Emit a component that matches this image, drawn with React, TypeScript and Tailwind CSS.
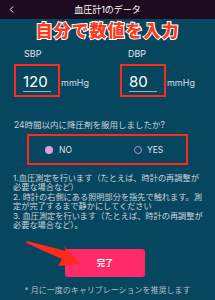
import { ChevronLeft } from 'lucide-react'

const font = "font-['Inter','Noto_Sans_CJK_JP',sans-serif]"

function ValueBox({ label, value, labelPad }: { label: string, value: string, labelPad: string }) {
  return (
    <div className="flex flex-col">
      <div className={`${labelPad} text-[9px] leading-[10px] text-[#e4e8ec]`}>{label}</div>
      <div className="mt-[5px] flex items-end">
        <div className="w-[46px] h-[33px] border-2 border-[#ff2a1a] px-[7px] pt-[7px]">
          <div className="border-b border-[#9fb4c0] text-[15px] leading-[17px] text-white pb-[1px]">{value}</div>
        </div>
        <div className="ml-[1px] mb-[9px] text-[9px] leading-[10px] text-[#d8dde2]">mmHg</div>
      </div>
    </div>
  )
}

export default function App() {
  return (
    <div className={`${font} w-[215px] h-[300px] overflow-hidden bg-[#07465f] flex flex-col`}>
      <div className="h-[19px] bg-[#1f0b20] relative flex items-center justify-center shrink-0">
        <ChevronLeft className="absolute left-[6px] top-[4px] text-white" size={11} strokeWidth={2} />
        <span className="text-[9px] leading-[10px] text-white">血圧計1のデータ</span>
      </div>

      <div className="relative flex-1 flex flex-col px-[14px]">
        <div className="mt-[2px] text-center text-[17px] leading-[20px] font-black tracking-[1px] text-[#ff3a1c] [-webkit-text-stroke:2px_white] [paint-order:stroke_fill]">
          自分で数値を入力
        </div>

        <div className="mt-[8px] flex gap-[31px]">
          <ValueBox label="SBP" value="120" labelPad="pl-[10px]" />
          <ValueBox label="DBP" value="80" labelPad="pl-[8px]" />
        </div>

        <div className="mt-[23px] text-[8.5px] leading-[10px] text-[#cdd4da]">24時間以内に降圧剤を服用しましたか?</div>

        <div className="mt-[4px] ml-[13px] w-[161px] h-[31px] border-2 border-[#ff2a1a] flex items-center">
          <div className="ml-[16px] flex items-center gap-[6px]">
            <span className="w-[8px] h-[8px] rounded-full bg-[#d9a3d6]" />
            <span className="text-[8.5px] leading-[10px] text-[#dfe3e8]">NO</span>
          </div>
          <div className="ml-[62px] flex items-center gap-[5px]">
            <span className="w-[8px] h-[8px] rounded-full border border-[#a494b4]" />
            <span className="text-[8.5px] leading-[10px] text-[#dfe3e8]">YES</span>
          </div>
        </div>

        <div className="-mx-[1px] mt-[9px] flex flex-col gap-[2px] text-[8.2px] leading-[8.5px] text-[#cdd4da] whitespace-nowrap">
          <div>1.血圧測定を行います（たとえば、時計の再調整が<br />必要な場合など）</div>
          <div>2. 時計の右側にある照明部分を指先で触れます。測<br />定が完了するまで静かにしてください</div>
          <div>3. 血圧測定を行います（たとえば、時計の再調整が<br />必要な場合など）。</div>
        </div>

        <div className="mt-[20px] flex justify-center">
          <button className="ml-[-5px] w-[80px] h-[28px] rounded-[3px] bg-[#ff2a67] text-white text-[8px] font-bold">完了</button>
        </div>

        <div className="mt-[8px] text-center text-[8px] leading-[10px] text-[#b5bec6]">* 月に一度のキャリブレーションを推奨します</div>

        <svg className="absolute left-0 top-0" width="215" height="281" viewBox="0 19 215 281">
          <polygon points="27,241 66,251 64,246 80,264 58,266 62,259 26,243" fill="#ff2a1a" />
        </svg>
      </div>
    </div>
  )
}
